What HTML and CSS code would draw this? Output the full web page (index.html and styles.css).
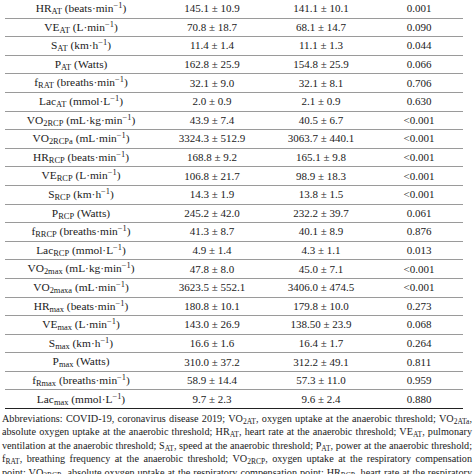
FILE: index.html
```html
<!DOCTYPE html>
<html lang="en">
<head>
<meta charset="utf-8">
<title>Table</title>
<link rel="stylesheet" href="styles.css">
</head>
<body>
<div class="page">
  <div class="table">
    <div class="row"><div class="c1">HR<sub>AT</sub> (beats·min<sup>−1</sup>)</div><div class="c2">145.1 ± 10.9</div><div class="c3">141.1 ± 10.1</div><div class="c4">0.001</div></div>
    <div class="row"><div class="c1">VE<sub>AT</sub> (L·min<sup>−1</sup>)</div><div class="c2">70.8 ± 18.7</div><div class="c3">68.1 ± 14.7</div><div class="c4">0.090</div></div>
    <div class="row"><div class="c1">S<sub>AT</sub> (km·h<sup>−1</sup>)</div><div class="c2">11.4 ± 1.4</div><div class="c3">11.1 ± 1.3</div><div class="c4">0.044</div></div>
    <div class="row"><div class="c1">P<sub>AT</sub> (Watts)</div><div class="c2">162.8 ± 25.9</div><div class="c3">154.8 ± 25.9</div><div class="c4">0.066</div></div>
    <div class="row"><div class="c1">f<sub>RAT</sub> (breaths·min<sup>−1</sup>)</div><div class="c2">32.1 ± 9.0</div><div class="c3">32.1 ± 8.1</div><div class="c4">0.706</div></div>
    <div class="row"><div class="c1">Lac<sub>AT</sub> (mmol·L<sup>−1</sup>)</div><div class="c2">2.0 ± 0.9</div><div class="c3">2.1 ± 0.9</div><div class="c4">0.630</div></div>
    <div class="row"><div class="c1">VO<sub>2RCP</sub> (mL·kg·min<sup>−1</sup>)</div><div class="c2">43.9 ± 7.4</div><div class="c3">40.5 ± 6.7</div><div class="c4">&lt;0.001</div></div>
    <div class="row"><div class="c1">VO<sub>2RCPa</sub> (mL·min<sup>−1</sup>)</div><div class="c2">3324.3 ± 512.9</div><div class="c3">3063.7 ± 440.1</div><div class="c4">&lt;0.001</div></div>
    <div class="row"><div class="c1">HR<sub>RCP</sub> (beats·min<sup>−1</sup>)</div><div class="c2">168.8 ± 9.2</div><div class="c3">165.1 ± 9.8</div><div class="c4">&lt;0.001</div></div>
    <div class="row"><div class="c1">VE<sub>RCP</sub> (L·min<sup>−1</sup>)</div><div class="c2">106.8 ± 21.7</div><div class="c3">98.9 ± 18.3</div><div class="c4">&lt;0.001</div></div>
    <div class="row"><div class="c1">S<sub>RCP</sub> (km·h<sup>−1</sup>)</div><div class="c2">14.3 ± 1.9</div><div class="c3">13.8 ± 1.5</div><div class="c4">&lt;0.001</div></div>
    <div class="row"><div class="c1">P<sub>RCP</sub> (Watts)</div><div class="c2">245.2 ± 42.0</div><div class="c3">232.2 ± 39.7</div><div class="c4">0.061</div></div>
    <div class="row"><div class="c1">f<sub>RRCP</sub> (breaths·min<sup>−1</sup>)</div><div class="c2">41.3 ± 8.7</div><div class="c3">40.1 ± 8.9</div><div class="c4">0.876</div></div>
    <div class="row"><div class="c1">Lac<sub>RCP</sub> (mmol·L<sup>−1</sup>)</div><div class="c2">4.9 ± 1.4</div><div class="c3">4.3 ± 1.1</div><div class="c4">0.013</div></div>
    <div class="row"><div class="c1">VO<sub>2max</sub> (mL·kg·min<sup>−1</sup>)</div><div class="c2">47.8 ± 8.0</div><div class="c3">45.0 ± 7.1</div><div class="c4">&lt;0.001</div></div>
    <div class="row"><div class="c1">VO<sub>2maxa</sub> (mL·min<sup>−1</sup>)</div><div class="c2">3623.5 ± 552.1</div><div class="c3">3406.0 ± 474.5</div><div class="c4">&lt;0.001</div></div>
    <div class="row"><div class="c1">HR<sub>max</sub> (beats·min<sup>−1</sup>)</div><div class="c2">180.8 ± 10.1</div><div class="c3">179.8 ± 10.0</div><div class="c4">0.273</div></div>
    <div class="row"><div class="c1">VE<sub>max</sub> (L·min<sup>−1</sup>)</div><div class="c2">143.0 ± 26.9</div><div class="c3">138.50 ± 23.9</div><div class="c4">0.068</div></div>
    <div class="row"><div class="c1">S<sub>max</sub> (km·h<sup>−1</sup>)</div><div class="c2">16.6 ± 1.6</div><div class="c3">16.4 ± 1.7</div><div class="c4">0.264</div></div>
    <div class="row"><div class="c1">P<sub>max</sub> (Watts)</div><div class="c2">310.0 ± 37.2</div><div class="c3">312.2 ± 49.1</div><div class="c4">0.811</div></div>
    <div class="row"><div class="c1">f<sub>Rmax</sub> (breaths·min<sup>−1</sup>)</div><div class="c2">58.9 ± 14.4</div><div class="c3">57.3 ± 11.0</div><div class="c4">0.959</div></div>
    <div class="row last"><div class="c1">Lac<sub>max</sub> (mmol·L<sup>−1</sup>)</div><div class="c2">9.7 ± 2.3</div><div class="c3">9.6 ± 2.4</div><div class="c4">0.880</div></div>
  </div>
  <p class="notes">Abbreviations: COVID-19, coronavirus disease 2019; VO<sub>2AT</sub>, oxygen uptake at the anaerobic threshold; VO<sub>2ATa</sub>, absolute oxygen uptake at the anaerobic threshold; HR<sub>AT</sub>, heart rate at the anaerobic threshold; VE<sub>AT</sub>, pulmonary ventilation at the anaerobic threshold; S<sub>AT</sub>, speed at the anaerobic threshold; P<sub>AT</sub>, power at the anaerobic threshold; f<sub>RAT</sub>, breathing frequency at the anaerobic threshold; VO<sub>2RCP</sub>, oxygen uptake at the respiratory compensation point; VO<sub>2RCPa</sub> absolute oxygen uptake at the respiratory compensation point; HR<sub>RCP</sub>, heart rate at the respiratory compensation point; VE<sub>RCP</sub>, pulmonary ventilation at the respiratory compensation point; S<sub>RCP</sub>, speed at the respiratory compensation point; P<sub>RCP</sub>, power at the respiratory compensation point.</p>
</div>
</body>
</html>
```

FILE: styles.css
```css
html, body {
  margin: 0;
  padding: 0;
  background: #ffffff;
}
body {
  font-family: "Liberation Serif", "Times New Roman", serif;
  color: #1a1a1a;
  overflow: hidden;
}
.page {
  width: 474px;
  height: 474px;
  overflow: hidden;
}
.table {
  margin-left: 5px;
  width: 458px;
}
.row {
  display: grid;
  grid-template-columns: 152px 110px 108px 88px;
  align-items: center;
  height: 18.6px;
  box-sizing: border-box;
  border-bottom: 1px solid #9a9a9a;
  font-size: 11px;
  line-height: 1;
}
.row.last {
  border-bottom: 1px solid #222;
}
.row > div {
  text-align: center;
  white-space: nowrap;
}
.row > .c1 {
  font-size: 11.4px;
}
sub, sup {
  font-size: 0.74em;
  line-height: 0;
}
sub {
  vertical-align: -0.25em;
}
sup {
  vertical-align: 0.45em;
}
.notes {
  margin: 0;
  padding: 3px 2px 0 2px;
  font-size: 10.2px;
  line-height: 13.4px;
  text-align: justify;
  width: 474px;
  box-sizing: border-box;
}
```
